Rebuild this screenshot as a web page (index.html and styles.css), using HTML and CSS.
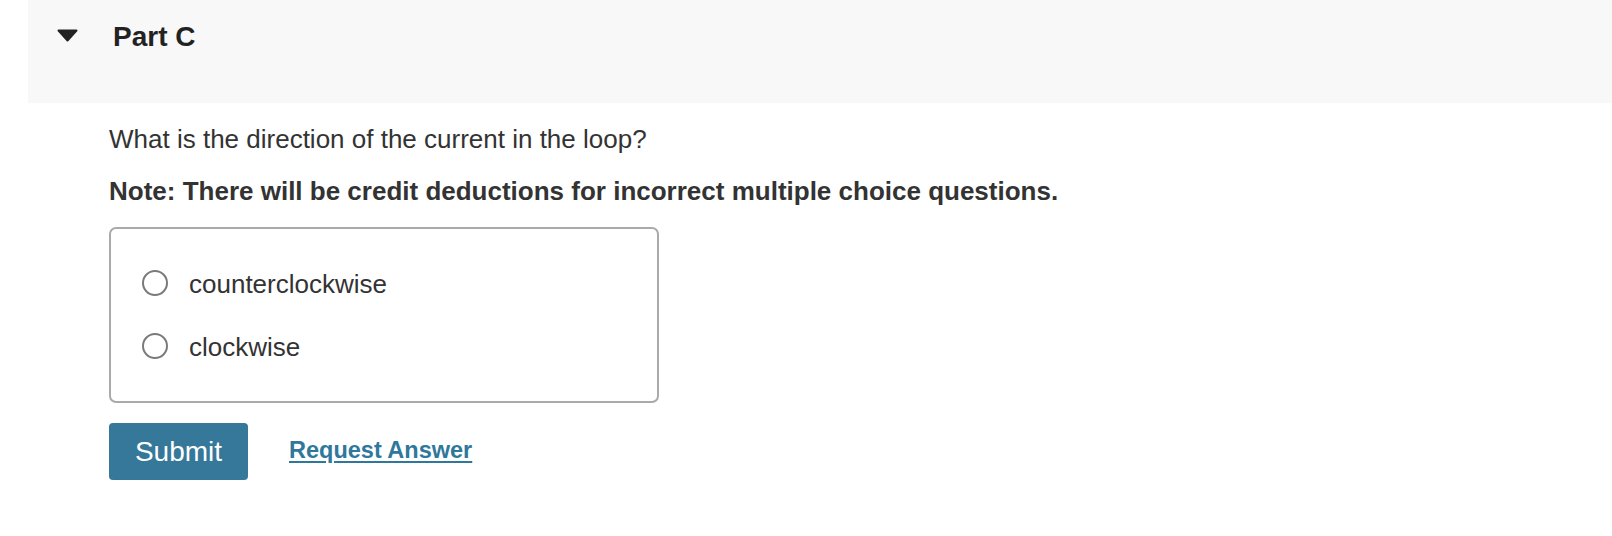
FILE: index.html
```html
<!DOCTYPE html>
<html lang="en">
<head>
    <meta charset="UTF-8">
    <meta name="viewport" content="width=device-width, initial-scale=1.0">
    <title>Part C</title>
    <link rel="stylesheet" href="styles.css">
</head>
<body>
    <div class="part">
        <div class="part-header">
            <span class="toggle">
                <svg width="21" height="13" viewBox="0 0 21 13">
                    <path d="M1.5 1.5 H19.5 L10.5 11.5 Z" fill="#222" stroke="#222" stroke-width="2" stroke-linejoin="round"/>
                </svg>
            </span>
            <h2>Part C</h2>
        </div>

        <div class="part-body">
            <p class="question">What is the direction of the current in the loop?</p>
            <p class="note">Note: There will be credit deductions for incorrect multiple choice questions.</p>

            <div class="choices">
                <label class="choice">
                    <input type="radio" name="direction" value="ccw">
                    <span>counterclockwise</span>
                </label>
                <label class="choice">
                    <input type="radio" name="direction" value="cw">
                    <span>clockwise</span>
                </label>
            </div>

            <div class="actions">
                <button class="btn-submit" type="button">Submit</button>
                <a class="link-answer" href="#">Request Answer</a>
            </div>
        </div>
    </div>
</body>
</html>
```

FILE: styles.css
```css
* {
    margin: 0;
    padding: 0;
    box-sizing: border-box;
    font-family: "Liberation Sans", Arial, Helvetica, sans-serif;
}

body {
    background-color: #fff;
    color: #333;
}

.part {
    margin-left: 28px;
}

.part-header {
    display: flex;
    align-items: flex-start;
    height: 103px;
    padding: 22px 0 0 29px;
    background-color: #f8f8f8;
}

.toggle {
    display: block;
    width: 21px;
    height: 13px;
    margin-top: 7px;
}

.toggle svg {
    display: block;
}

.part-header h2 {
    margin-left: 35px;
    font-size: 28px;
    line-height: 30px;
    font-weight: bold;
    color: #222;
}

.part-body {
    padding-left: 81px;
}

.question {
    margin-top: 20px;
    font-size: 26px;
    line-height: 32px;
}

.note {
    margin-top: 20px;
    font-size: 26px;
    line-height: 32px;
    font-weight: bold;
}

.choices {
    width: 550px;
    margin-top: 20px;
    padding: 39px 0 38px 31px;
    border: 2px solid #aaa;
    border-radius: 7px;
}

.choice {
    display: flex;
    align-items: flex-start;
    font-size: 26px;
    line-height: 32px;
    cursor: pointer;
}

.choice + .choice {
    margin-top: 31px;
}

.choice input {
    appearance: none;
    -webkit-appearance: none;
    width: 26px;
    height: 26px;
    margin: 2px 21px 0 0;
    border: 2px solid #7a7a7a;
    border-radius: 50%;
    background-color: #fff;
}

.actions {
    display: flex;
    align-items: center;
    margin-top: 20px;
}

.btn-submit {
    width: 139px;
    height: 57px;
    padding-top: 1px;
    border: none;
    border-radius: 4px;
    background-color: #367899;
    color: #fff;
    font-size: 28px;
    line-height: 56px;
    cursor: pointer;
}

.link-answer {
    margin-left: 41px;
    margin-top: -4px;
    font-size: 23.5px;
    line-height: 26px;
    font-weight: bold;
    color: #2f789c;
    text-decoration: underline;
    text-underline-offset: 3px;
}
```
